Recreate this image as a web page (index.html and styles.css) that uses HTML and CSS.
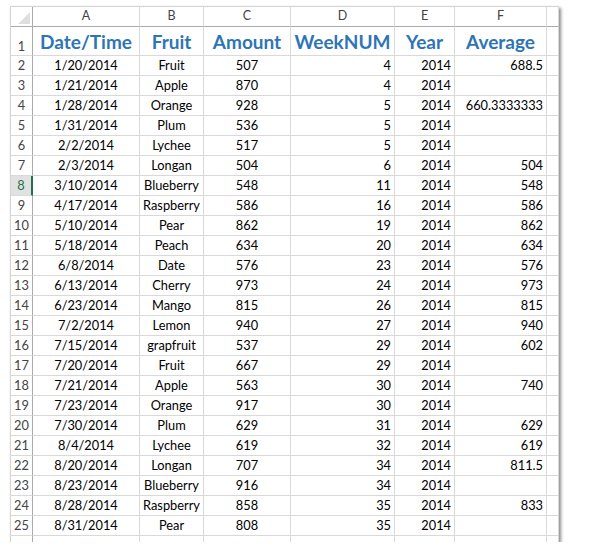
FILE: index.html
```html
<!DOCTYPE html>
<html>
<head>
<meta charset="utf-8">
<link rel="stylesheet" href="styles.css">
</head>
<body>
<div class="sheet">
  <div class="row colhead">
    <div class="c rh corner"><span class="tri"></span></div>
    <div class="c ch">A</div><div class="c ch">B</div><div class="c ch">C</div><div class="c ch">D</div><div class="c ch">E</div><div class="c ch">F</div><div class="c ch"></div>
  </div>
  <div class="row title">
    <div class="c rh">1</div>
    <div class="c ctr hd">Date/Time</div><div class="c ctr hd">Fruit</div><div class="c ctr hd">Amount</div><div class="c ctr hd">WeekNUM</div><div class="c ctr hd">Year</div><div class="c ctr hd">Average</div><div class="c"></div>
  </div>
  <div class="row"><div class="c rh">2</div><div class="c ctr">1/20/2014</div><div class="c ctr">Fruit</div><div class="c ctr">507</div><div class="c num">4</div><div class="c num">2014</div><div class="c num">688.5</div><div class="c"></div></div>
  <div class="row"><div class="c rh">3</div><div class="c ctr">1/21/2014</div><div class="c ctr">Apple</div><div class="c ctr">870</div><div class="c num">4</div><div class="c num">2014</div><div class="c num"></div><div class="c"></div></div>
  <div class="row"><div class="c rh">4</div><div class="c ctr">1/28/2014</div><div class="c ctr">Orange</div><div class="c ctr">928</div><div class="c num">5</div><div class="c num">2014</div><div class="c num">660.3333333</div><div class="c"></div></div>
  <div class="row"><div class="c rh">5</div><div class="c ctr">1/31/2014</div><div class="c ctr">Plum</div><div class="c ctr">536</div><div class="c num">5</div><div class="c num">2014</div><div class="c num"></div><div class="c"></div></div>
  <div class="row"><div class="c rh">6</div><div class="c ctr">2/2/2014</div><div class="c ctr">Lychee</div><div class="c ctr">517</div><div class="c num">5</div><div class="c num">2014</div><div class="c num"></div><div class="c"></div></div>
  <div class="row"><div class="c rh">7</div><div class="c ctr">2/3/2014</div><div class="c ctr">Longan</div><div class="c ctr">504</div><div class="c num">6</div><div class="c num">2014</div><div class="c num">504</div><div class="c"></div></div>
  <div class="row"><div class="c rh sel">8</div><div class="c ctr">3/10/2014</div><div class="c ctr">Blueberry</div><div class="c ctr">548</div><div class="c num">11</div><div class="c num">2014</div><div class="c num">548</div><div class="c"></div></div>
  <div class="row"><div class="c rh">9</div><div class="c ctr">4/17/2014</div><div class="c ctr">Raspberry</div><div class="c ctr">586</div><div class="c num">16</div><div class="c num">2014</div><div class="c num">586</div><div class="c"></div></div>
  <div class="row"><div class="c rh">10</div><div class="c ctr">5/10/2014</div><div class="c ctr">Pear</div><div class="c ctr">862</div><div class="c num">19</div><div class="c num">2014</div><div class="c num">862</div><div class="c"></div></div>
  <div class="row"><div class="c rh">11</div><div class="c ctr">5/18/2014</div><div class="c ctr">Peach</div><div class="c ctr">634</div><div class="c num">20</div><div class="c num">2014</div><div class="c num">634</div><div class="c"></div></div>
  <div class="row"><div class="c rh">12</div><div class="c ctr">6/8/2014</div><div class="c ctr">Date</div><div class="c ctr">576</div><div class="c num">23</div><div class="c num">2014</div><div class="c num">576</div><div class="c"></div></div>
  <div class="row"><div class="c rh">13</div><div class="c ctr">6/13/2014</div><div class="c ctr">Cherry</div><div class="c ctr">973</div><div class="c num">24</div><div class="c num">2014</div><div class="c num">973</div><div class="c"></div></div>
  <div class="row"><div class="c rh">14</div><div class="c ctr">6/23/2014</div><div class="c ctr">Mango</div><div class="c ctr">815</div><div class="c num">26</div><div class="c num">2014</div><div class="c num">815</div><div class="c"></div></div>
  <div class="row"><div class="c rh">15</div><div class="c ctr">7/2/2014</div><div class="c ctr">Lemon</div><div class="c ctr">940</div><div class="c num">27</div><div class="c num">2014</div><div class="c num">940</div><div class="c"></div></div>
  <div class="row"><div class="c rh">16</div><div class="c ctr">7/15/2014</div><div class="c ctr">grapfruit</div><div class="c ctr">537</div><div class="c num">29</div><div class="c num">2014</div><div class="c num">602</div><div class="c"></div></div>
  <div class="row"><div class="c rh">17</div><div class="c ctr">7/20/2014</div><div class="c ctr">Fruit</div><div class="c ctr">667</div><div class="c num">29</div><div class="c num">2014</div><div class="c num"></div><div class="c"></div></div>
  <div class="row"><div class="c rh">18</div><div class="c ctr">7/21/2014</div><div class="c ctr">Apple</div><div class="c ctr">563</div><div class="c num">30</div><div class="c num">2014</div><div class="c num">740</div><div class="c"></div></div>
  <div class="row"><div class="c rh">19</div><div class="c ctr">7/23/2014</div><div class="c ctr">Orange</div><div class="c ctr">917</div><div class="c num">30</div><div class="c num">2014</div><div class="c num"></div><div class="c"></div></div>
  <div class="row"><div class="c rh">20</div><div class="c ctr">7/30/2014</div><div class="c ctr">Plum</div><div class="c ctr">629</div><div class="c num">31</div><div class="c num">2014</div><div class="c num">629</div><div class="c"></div></div>
  <div class="row"><div class="c rh">21</div><div class="c ctr">8/4/2014</div><div class="c ctr">Lychee</div><div class="c ctr">619</div><div class="c num">32</div><div class="c num">2014</div><div class="c num">619</div><div class="c"></div></div>
  <div class="row"><div class="c rh">22</div><div class="c ctr">8/20/2014</div><div class="c ctr">Longan</div><div class="c ctr">707</div><div class="c num">34</div><div class="c num">2014</div><div class="c num">811.5</div><div class="c"></div></div>
  <div class="row"><div class="c rh">23</div><div class="c ctr">8/23/2014</div><div class="c ctr">Blueberry</div><div class="c ctr">916</div><div class="c num">34</div><div class="c num">2014</div><div class="c num"></div><div class="c"></div></div>
  <div class="row"><div class="c rh">24</div><div class="c ctr">8/28/2014</div><div class="c ctr">Raspberry</div><div class="c ctr">858</div><div class="c num">35</div><div class="c num">2014</div><div class="c num">833</div><div class="c"></div></div>
  <div class="row"><div class="c rh">25</div><div class="c ctr">8/31/2014</div><div class="c ctr">Pear</div><div class="c ctr">808</div><div class="c num">35</div><div class="c num">2014</div><div class="c num"></div><div class="c"></div></div>
  <div class="row"><div class="c rh"></div><div class="c"></div><div class="c"></div><div class="c"></div><div class="c"></div><div class="c"></div><div class="c"></div><div class="c"></div></div>
</div>
</body>
</html>
```

FILE: styles.css
```css
html, body {
  margin: 0;
  padding: 0;
  background: #ffffff;
}
body {
  font-family: Lato, "Liberation Sans", sans-serif;
  font-size: 12.8px;
  color: #000;
}
.sheet {
  box-sizing: border-box;
  margin: 6px 0 0 10px;
  width: 549px;
  height: 536px;
  overflow: hidden;
  border-top: 1px solid #d4d4d4;
  border-left: 1px solid #d4d4d4;
  background: #fff;
  box-shadow: 2px 2px 3px rgba(0, 0, 0, 0.45);
}
.row {
  display: grid;
  grid-template-columns: 22px 107px 64px 87px 104px 60px 92px 12px;
  height: 20px;
}
.row.colhead { height: 20px; }
.row.title { height: 29px; }
.c {
  box-sizing: border-box;
  border-right: 1px solid #d9d9d9;
  border-bottom: 1px solid #d9d9d9;
  display: flex;
  align-items: flex-end;
  line-height: 16px;
  padding: 0 3px 2px 3px;
  white-space: nowrap;
  overflow: hidden;
}
.ctr { justify-content: center; }
.num { justify-content: flex-end; }
.rh {
  justify-content: center;
  padding: 0 0 2px 0;
  color: #444;
  border-right-color: #ababab;
}
.rh.sel {
  background: #e1e1e1;
  color: #217346;
  border-right: 2px solid #217346;
}
.colhead .c {
  border-bottom-color: #ababab;
  color: #444;
  font-size: 12.5px;
  justify-content: center;
  padding-bottom: 2px;
}
.colhead .corner {
  justify-content: flex-end;
  align-items: flex-end;
  padding: 0 2px 2px 0;
}
.tri {
  width: 12px;
  height: 12px;
  background: #dfdfdf;
  clip-path: polygon(100% 0, 100% 100%, 0 100%);
}
.hd {
  font-weight: 700;
  font-size: 19px;
  color: #2e75b6;
  line-height: 24px;
  padding-bottom: 1px;
}
.title .rh { padding-bottom: 1px; }
```
